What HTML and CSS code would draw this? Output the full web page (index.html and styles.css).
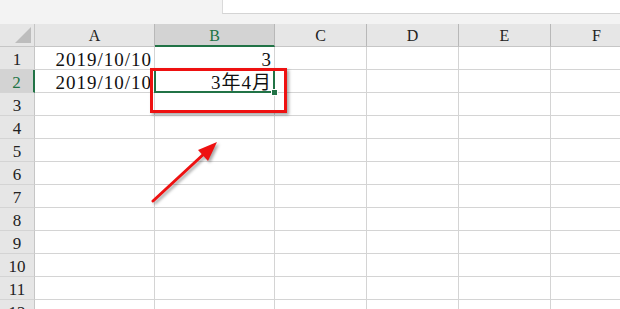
FILE: index.html
```html
<!DOCTYPE html>
<html lang="zh-CN">
<head>
    <meta charset="UTF-8">
    <title>Sheet1</title>
    <link rel="stylesheet" href="styles.css">
</head>
<body>
    <div class="topbar">
        <div class="formula"></div>
    </div>

    <div class="sheet">
        <div class="grid">
            <div class="corner"><span class="tri"></span></div>
            <div class="colhead">A</div>
            <div class="colhead active">B</div>
            <div class="colhead">C</div>
            <div class="colhead">D</div>
            <div class="colhead">E</div>
            <div class="colhead">F</div>

            <div class="rowhead">1</div>
            <div class="cell num">2019/10/10</div>
            <div class="cell num">3</div>
            <div class="cell"></div><div class="cell"></div><div class="cell"></div><div class="cell"></div>

            <div class="rowhead active">2</div>
            <div class="cell num">2019/10/10</div>
            <div class="cell num selected">3年4月</div>
            <div class="cell"></div><div class="cell"></div><div class="cell"></div><div class="cell"></div>

            <div class="rowhead">3</div>
            <div class="cell"></div><div class="cell"></div><div class="cell"></div><div class="cell"></div><div class="cell"></div><div class="cell"></div>
            <div class="rowhead">4</div>
            <div class="cell"></div><div class="cell"></div><div class="cell"></div><div class="cell"></div><div class="cell"></div><div class="cell"></div>
            <div class="rowhead">5</div>
            <div class="cell"></div><div class="cell"></div><div class="cell"></div><div class="cell"></div><div class="cell"></div><div class="cell"></div>
            <div class="rowhead">6</div>
            <div class="cell"></div><div class="cell"></div><div class="cell"></div><div class="cell"></div><div class="cell"></div><div class="cell"></div>
            <div class="rowhead">7</div>
            <div class="cell"></div><div class="cell"></div><div class="cell"></div><div class="cell"></div><div class="cell"></div><div class="cell"></div>
            <div class="rowhead">8</div>
            <div class="cell"></div><div class="cell"></div><div class="cell"></div><div class="cell"></div><div class="cell"></div><div class="cell"></div>
            <div class="rowhead">9</div>
            <div class="cell"></div><div class="cell"></div><div class="cell"></div><div class="cell"></div><div class="cell"></div><div class="cell"></div>
            <div class="rowhead">10</div>
            <div class="cell"></div><div class="cell"></div><div class="cell"></div><div class="cell"></div><div class="cell"></div><div class="cell"></div>
            <div class="rowhead">11</div>
            <div class="cell"></div><div class="cell"></div><div class="cell"></div><div class="cell"></div><div class="cell"></div><div class="cell"></div>
            <div class="rowhead">12</div>
            <div class="cell"></div><div class="cell"></div><div class="cell"></div><div class="cell"></div><div class="cell"></div><div class="cell"></div>
        </div>

        <!-- annotation drawn on top of the sheet -->
        <div class="mark"></div>
        <svg class="arrow" width="620" height="285" viewBox="0 0 620 285">
            <line x1="153" y1="177" x2="206" y2="128" stroke="#ee1111" stroke-width="3" stroke-linecap="round"/>
            <polygon points="217,118 198,126 208,137" fill="#ee1111"/>
        </svg>
    </div>
</body>
</html>
```

FILE: styles.css
```css
body {
    margin: 0;
    width: 620px;
    height: 309px;
    overflow: hidden;
    background: #fff;
    font-family: "Liberation Serif", "Noto Sans CJK SC", serif;
}

.topbar {
    height: 24px;
    background: #f3f3f3;
}

.formula {
    margin-left: 222px;
    height: 14px;
    background: #fff;
    border-left: 1px solid #dadada;
    border-bottom: 1px solid #d4d4d4;
    box-sizing: border-box;
}

.sheet {
    position: relative;
    height: 285px;
    overflow: hidden;
}

.grid {
    display: grid;
    grid-template-columns: 35px 120px 120px 92px 92px 92px 92px;
    grid-auto-rows: 23px;
}

.grid > div {
    box-sizing: border-box;
}

.corner {
    position: relative;
    background: #e6e6e6;
    border-right: 1px solid #c6c6c6;
    border-bottom: 1px solid #c6c6c6;
}

.tri {
    position: absolute;
    right: 3px;
    bottom: 3px;
    width: 0;
    height: 0;
    border-left: 16px solid transparent;
    border-bottom: 16px solid #bdbdbd;
}

.colhead {
    background: #e6e6e6;
    border-right: 1px solid #b8b8b8;
    border-bottom: 1px solid #c6c6c6;
    font-size: 16px;
    color: #222;
    text-align: center;
    line-height: 24px;
}

.colhead.active {
    background: #d3d3d3;
    color: #217346;
    border-bottom: 2px solid #217346;
}

.rowhead {
    background: #e6e6e6;
    border-right: 1px solid #c6c6c6;
    border-bottom: 1px solid #d4d4d4;
    font-size: 17px;
    color: #222;
    text-align: center;
    line-height: 25px;
}

.rowhead.active {
    background: #d3d3d3;
    color: #217346;
    border-right: 2px solid #217346;
}

.cell {
    border-right: 1px solid #d4d4d4;
    border-bottom: 1px solid #d4d4d4;
}

.num {
    font-size: 19px;
    letter-spacing: 1px;
    color: #111;
    text-align: right;
    padding-right: 2px;
    line-height: 25px;
    white-space: nowrap;
}

.selected {
    position: relative;
}

.selected::after {
    content: "";
    position: absolute;
    left: -1px;
    top: -1px;
    right: -1px;
    bottom: -1px;
    border: 2px solid #217346;
}

.selected::before {
    content: "";
    position: absolute;
    right: -4px;
    bottom: -4px;
    width: 5px;
    height: 5px;
    background: #217346;
    border: 1px solid #fff;
    z-index: 1;
}

.mark {
    position: absolute;
    left: 150px;
    top: 44px;
    width: 137px;
    height: 45px;
    box-sizing: border-box;
    border: 3px solid #ee1111;
    box-shadow: 2px 2px 3px rgba(0, 0, 0, 0.35);
}

.arrow {
    position: absolute;
    left: 0;
    top: 0;
    filter: drop-shadow(2px 2px 1.5px rgba(0, 0, 0, 0.35));
}
```
